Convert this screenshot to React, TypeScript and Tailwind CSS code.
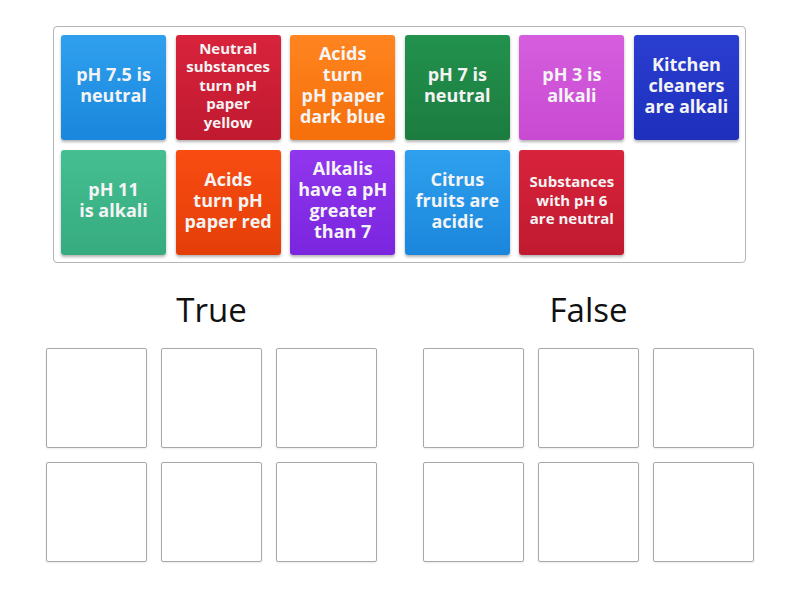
import React from "react";

type Card = { lines: string[]; from: string; to: string; small?: boolean };

const cards: Card[] = [
  { lines: ["pH 7.5 is", "neutral"], from: "#2fa0ee", to: "#1a86dc" },
  { lines: ["Neutral", "substances", "turn pH", "paper", "yellow"], from: "#d8233c", to: "#c01a30", small: true },
  { lines: ["Acids", "turn", "pH paper", "dark blue"], from: "#ff8520", to: "#f56f0a" },
  { lines: ["pH 7 is", "neutral"], from: "#22924d", to: "#1c7c40" },
  { lines: ["pH 3 is", "alkali"], from: "#d65ede", to: "#c84ad2" },
  { lines: ["Kitchen", "cleaners", "are alkali"], from: "#2a3ed0", to: "#1e2fbc" },
  { lines: ["pH 11", "is alkali"], from: "#45bf91", to: "#36ab80" },
  { lines: ["Acids", "turn pH", "paper red"], from: "#f84c12", to: "#e43e08" },
  { lines: ["Alkalis", "have a pH", "greater", "than 7"], from: "#9036ee", to: "#7a25de" },
  { lines: ["Citrus", "fruits are", "acidic"], from: "#2fa0ee", to: "#1a86dc" },
  { lines: ["Substances", "with pH 6", "are neutral"], from: "#d8233c", to: "#c01a30", small: true },
];

function Tile({ c }: { c: Card }) {
  return (
    <div
      className="w-[105px] h-[105px] rounded-[3px] flex items-center justify-center text-center pb-[5px] shadow-[0_2px_3px_rgba(0,0,0,0.3)]"
      style={{ background: `linear-gradient(to bottom, ${c.from}, ${c.to})` }}
    >
      <div
        className={
          c.small
            ? "text-[15px] leading-[18.5px] font-bold text-[#f4f4f4]"
            : "text-[18px] leading-[21px] font-bold text-[#f4f4f4]"
        }
      >
        {c.lines.map((l, i) => (
          <div key={i} className="whitespace-nowrap">
            {l}
          </div>
        ))}
      </div>
    </div>
  );
}

function Group({ title }: { title: string }) {
  return (
    <div className="w-[331px] flex flex-col items-center">
      <div className="text-[33px] leading-[44px] text-[#111] h-[44px]">{title}</div>
      <div className="mt-[16px] grid grid-cols-[101px_101px_101px] gap-x-[14px] gap-y-[14px]">
        {Array.from({ length: 6 }).map((_, i) => (
          <div
            key={i}
            className="w-[101px] h-[100px] bg-white border border-[#a8a8a8] rounded-[2px] shadow-[0_1px_2px_rgba(0,0,0,0.08)]"
          />
        ))}
      </div>
    </div>
  );
}

export default function App() {
  return (
    <div
      className="w-[800px] h-[600px] bg-white relative"
      style={{ fontFamily: '"Open Sans", "Noto Sans", sans-serif' }}
    >
      <div className="pt-[26px] pl-[53px]">
        <div className="w-[693px] h-[237px] border border-[#b4b4b4] rounded-[4px] pl-[7px] pt-[8px]">
          <div className="grid grid-cols-[105px_105px_105px_105px_105px_105px] gap-x-[9.6px] gap-y-[10px]">
            {cards.map((c, i) => (
              <Tile key={i} c={c} />
            ))}
          </div>
        </div>
      </div>
      <div className="mt-[25px] pl-[46px] flex gap-[46px]">
        <Group title="True" />
        <Group title="False" />
      </div>
    </div>
  );
}
